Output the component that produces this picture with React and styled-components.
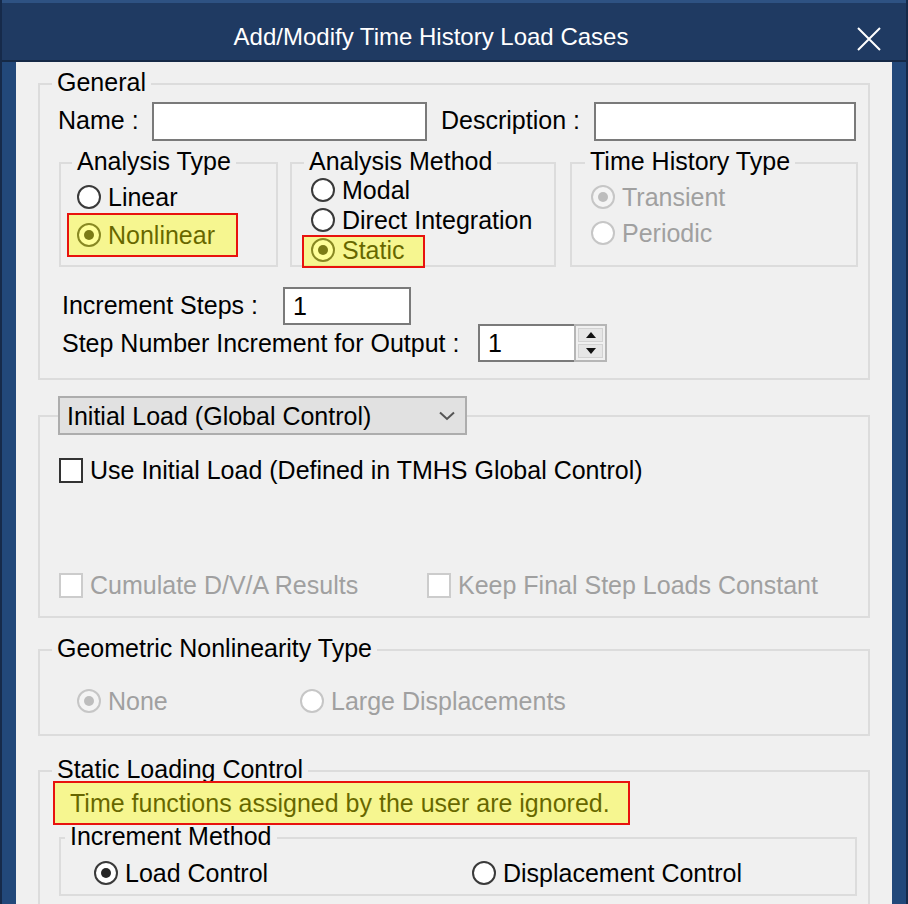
import React from 'react';
import styled, { createGlobalStyle } from 'styled-components';

const GlobalStyle = createGlobalStyle`
  html, body { margin: 0; padding: 0; }
  body {
    background: #22487a;
    font-family: "Liberation Sans", Arial, sans-serif;
  }
  #root { width: 908px; height: 904px; }
`;

const Frame = styled.div`
  width: 908px;
  height: 904px;
  box-sizing: border-box;
  border-left: 2px solid #162a4a;
  border-right: 2px solid #162a4a;
  background: #22487a;
  display: flex;
  flex-direction: column;
  overflow: hidden;
`;

const TitleBar = styled.header`
  flex: none;
  height: 62px;
  box-sizing: border-box;
  background: #1f3a62;
  border-top: 3px solid #2e5283;
  border-bottom: 2px solid #152946;
  display: flex;
  align-items: center;
  padding: 10px 14px 0;
  color: #fff;
`;

const Title = styled.h1`
  flex: 1;
  margin: 0;
  text-align: center;
  font-weight: normal;
  font-size: 24px;
`;

const CloseButton = styled.button`
  width: 46px;
  height: 40px;
  margin-top: 4px;
  border: 0;
  padding: 0;
  background: none;
  display: flex;
  align-items: center;
  justify-content: center;
`;

const Client = styled.main`
  flex: 1;
  margin: 0 14px;
  background: #f0f0f0;
  padding: 8px 22px 0;
  display: flex;
  flex-direction: column;
  font-size: 25px;
  line-height: 28px;
  color: #000;
`;

const Group = styled.fieldset`
  margin: ${p => p.$mt || 0}px ${p => p.$mr || 0}px 0 ${p => p.$ml || 0}px;
  padding: 0;
  border: 2px solid #dcdcdc;
  min-width: 0;
  box-sizing: border-box;
  ${p => (p.$w ? `width: ${p.$w}px; flex: none;` : '')}
  ${p => (p.$h ? `height: ${p.$h}px;` : '')}
  ${p => (p.$stretch ? 'align-self: stretch;' : '')}
`;

/* caption text sits a little above the border line, as in the classic dialog */
const Caption = styled.legend`
  margin-left: ${p => p.$indent ?? 12}px;
  padding: 0 5px 4px;
  box-sizing: border-box;
  height: 28px;
  line-height: 24px;
  font-size: 25px;
`;

const SelectCaption = styled.legend`
  margin-left: 18px;
  padding: 0;
  height: 39px;
`;

const Inner = styled.div`
  display: flex;
  flex-direction: column;
  align-items: flex-start;
  padding: ${p => p.$pt || 0}px 0 ${p => p.$pb || 0}px ${p => p.$pl || 0}px;
`;

const Row = styled.div`
  display: flex;
  align-items: center;
  height: ${p => p.$h}px;
  margin-top: ${p => p.$mt || 0}px;
  margin-left: ${p => p.$ml || 0}px;
`;

const Label = styled.span`
  display: inline-block;
  width: ${p => p.$w}px;
  margin-left: ${p => p.$ml || 0}px;
  padding-bottom: ${p => p.$lift || 0}px;
  flex: none;
  white-space: nowrap;
`;

const TextBox = styled.input`
  box-sizing: border-box;
  width: ${p => p.$w}px;
  height: ${p => p.$h || 39}px;
  border: 2px solid #7a7a7a;
  ${p => (p.$joined ? 'border-right: 0;' : '')}
  background: #fff;
  padding: 0 8px;
  font: inherit;
  color: #000;
  outline: none;
  margin: 0;
`;

const GroupRow = styled.div`
  display: flex;
  margin-top: 8px;
  margin-left: 1px;
`;

const SubRowSpacer = styled.div`
  width: ${p => p.$w}px;
  flex: none;
`;

const Stack = styled.div`
  display: flex;
  flex-direction: column;
  align-items: flex-start;
  gap: ${p => p.$gap || 0}px;
  margin-top: ${p => p.$mt || 0}px;
  padding-left: ${p => p.$pl || 0}px;
`;

const Option = styled.label`
  position: relative;
  display: inline-flex;
  align-items: center;
  gap: 7px;
  height: ${p => p.$h || 36}px;
  color: ${p => (p.$disabled ? '#a0a0a0' : '#000')};
  white-space: nowrap;
`;

const RadioMark = styled.span`
  flex: none;
  box-sizing: border-box;
  width: 24px;
  height: 24px;
  border-radius: 50%;
  border: 2px solid ${p => (p.$disabled ? '#c6c6c6' : '#3a3a3a')};
  background: ${p => (p.$disabled && p.$on ? '#f4f4f4' : '#fff')};
  display: flex;
  align-items: center;
  justify-content: center;

  &::after {
    content: '';
    display: ${p => (p.$on ? 'block' : 'none')};
    width: 10px;
    height: 10px;
    border-radius: 50%;
    background: ${p => (p.$disabled ? '#bdbdbd' : '#262626')};
  }
`;

const CheckMark = styled.span`
  flex: none;
  box-sizing: border-box;
  width: 24px;
  height: 25px;
  border: 2px solid ${p => (p.$disabled ? '#cccccc' : '#333')};
  background: #fff;
`;

const Pair = styled.div`
  display: grid;
  grid-template-columns: ${p => p.$first}px auto;
  align-items: center;
  margin-top: ${p => p.$mt || 0}px;
  padding-left: ${p => p.$pl || 0}px;
`;

const Mark = styled.span`
  position: absolute;
  left: ${p => p.$l}px;
  right: ${p => p.$r}px;
  top: ${p => p.$t}px;
  bottom: ${p => p.$b}px;
  background: rgba(255, 255, 0, 0.4);
  border: 2px solid #e8120e;
  pointer-events: none;
`;

const Note = styled.div`
  position: relative;
  display: inline-flex;
  align-items: center;
  height: 36px;
  margin-left: 11px;
  white-space: nowrap;
`;

const Spin = styled.div`
  display: flex;
  align-items: stretch;
  height: 38px;
`;

const SpinButtons = styled.div`
  box-sizing: border-box;
  width: 33px;
  border: 2px solid #b6b6b6;
  background: #f0f0f0;
  display: flex;
  flex-direction: column;
  gap: 2px;
  padding: 2px;
`;

const SpinButton = styled.div`
  flex: 1;
  background: #e6e6e6;
  border: 1px solid #d2d2d2;
  display: flex;
  align-items: center;
  justify-content: center;
`;

const Select = styled.div`
  box-sizing: border-box;
  width: 409px;
  height: 39px;
  background: #e1e1e1;
  border: 2px solid #adadad;
  display: flex;
  align-items: center;
  justify-content: space-between;
  padding: 0 10px 0 7px;
  font-size: 25px;
  white-space: nowrap;
`;

function Radio({ label, on, disabled, h, children }) {
  return (
    <Option $disabled={disabled} $h={h}>
      <RadioMark $on={on} $disabled={disabled} />
      <span>{label}</span>
      {children}
    </Option>
  );
}

function Check({ label, disabled }) {
  return (
    <Option $disabled={disabled}>
      <CheckMark $disabled={disabled} />
      <span>{label}</span>
    </Option>
  );
}

export default function App() {
  return (
    <>
      <GlobalStyle />
      <Frame>
        <TitleBar>
          <Title>Add/Modify Time History Load Cases</Title>
          <CloseButton aria-label="Close">
            <svg width="24" height="24" viewBox="0 0 24 24">
              <path d="M1 1 L23 23 M23 1 L1 23" stroke="#fff" strokeWidth="2" fill="none" />
            </svg>
          </CloseButton>
        </TitleBar>

        <Client>
          <Group>
            <Caption>General</Caption>
            <Inner $pl={18} $pt={4} $pb={16}>
              <Row $h={39}>
                <Label $w={94} $lift={3}>Name :</Label>
                <TextBox $w={275} readOnly value="" />
                <Label $w={153} $ml={14} $lift={3}>Description :</Label>
                <TextBox $w={262} readOnly value="" />
              </Row>

              <GroupRow>
                <Group $w={219} $h={118}>
                  <Caption $indent={11}>Analysis Type</Caption>
                  <Stack $mt={2} $gap={2} $pl={16}>
                    <Radio label="Linear" />
                    <Radio label="Nonlinear" on>
                      <Mark $l={-10} $r={-23} $t={-4} $b={-4} />
                    </Radio>
                  </Stack>
                </Group>
                <SubRowSpacer $w={12} />
                <Group $w={266} $h={118}>
                  <Caption $indent={12}>Analysis Method</Caption>
                  <Stack $mt={-2} $pl={19}>
                    <Radio label="Modal" h={30} />
                    <Radio label="Direct Integration" h={30} />
                    <Radio label="Static" h={30} on>
                      <Mark $l={-9} $r={-20} $t={0} $b={-3} />
                    </Radio>
                  </Stack>
                </Group>
                <SubRowSpacer $w={14} />
                <Group $w={288} $h={118}>
                  <Caption $indent={13}>Time History Type</Caption>
                  <Stack $mt={2} $pl={19}>
                    <Radio label="Transient" on disabled />
                    <Radio label="Periodic" disabled />
                  </Stack>
                </Group>
              </GroupRow>

              <Row $h={38} $mt={20} $ml={4}>
                <Label $w={221} $lift={2}>Increment Steps :</Label>
                <TextBox $w={128} $h={38} readOnly value="1" />
              </Row>
              <Row $h={38} $mt={-1} $ml={4}>
                <Label $w={416}>Step Number Increment for Output :</Label>
                <Spin>
                  <TextBox $w={96} $h={38} $joined readOnly value="1" />
                  <SpinButtons>
                    <SpinButton>
                      <svg width="10" height="6" viewBox="0 0 10 6">
                        <path d="M5 0 L10 6 L0 6 Z" fill="#111" />
                      </svg>
                    </SpinButton>
                    <SpinButton>
                      <svg width="10" height="6" viewBox="0 0 10 6">
                        <path d="M0 0 L10 0 L5 6 Z" fill="#111" />
                      </svg>
                    </SpinButton>
                  </SpinButtons>
                </Spin>
              </Row>
            </Inner>
          </Group>

          <Group $mt={16}>
            <SelectCaption>
              <Select>
                <span>Initial Load (Global Control)</span>
                <svg width="16" height="10" viewBox="0 0 16 10">
                  <path d="M1 1.5 L8 8 L15 1.5" stroke="#555" strokeWidth="2" fill="none" />
                </svg>
              </Select>
            </SelectCaption>
            <Inner $pl={19} $pt={17} $pb={13}>
              <Check label="Use Initial Load (Defined in TMHS Global Control)" />
              <Pair $first={368} $mt={79}>
                <Check label="Cumulate D/V/A Results" disabled />
                <Check label="Keep Final Step Loads Constant" disabled />
              </Pair>
            </Inner>
          </Group>

          <Group $mt={18}>
            <Caption>Geometric Nonlinearity Type</Caption>
            <Inner $pt={19} $pb={15}>
              <Pair $first={223} $pl={37}>
                <Radio label="None" on disabled />
                <Radio label="Large Displacements" disabled />
              </Pair>
            </Inner>
          </Group>

          <Group $mt={21}>
            <Caption>Static Loading Control</Caption>
            <Inner $pl={19} $pb={12}>
              <Note>
                <span>Time functions assigned by the user are ignored.</span>
                <Mark $l={-17} $r={-20} $t={-4} $b={-4} />
              </Note>
              <Group $mt={3} $mr={11} $stretch>
                <Caption $indent={4}>Increment Method</Caption>
                <Inner $pt={3} $pb={3}>
                  <Pair $first={378} $pl={33}>
                    <Radio label="Load Control" on />
                    <Radio label="Displacement Control" />
                  </Pair>
                </Inner>
              </Group>
            </Inner>
          </Group>
        </Client>
      </Frame>
    </>
  );
}
